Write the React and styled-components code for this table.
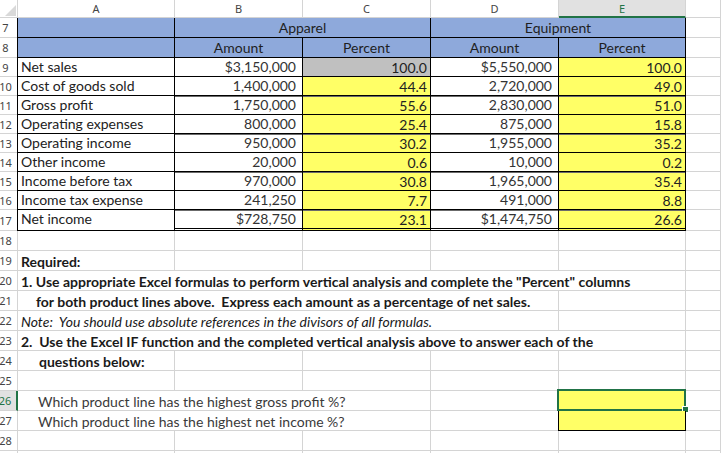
import React from "react";
import styled, { createGlobalStyle } from "styled-components";

const GlobalStyle = createGlobalStyle`
  html, body {
    margin: 0;
    padding: 0;
    background: #fff;
  }
`;

const COLS = "18px 157px 128px 128px 128px 127px 35px";
const GREEN = "#217346";
const BLUE = "#8ea9db";
const YELLOW = "#ffff66";

const data = [
  { n: 9, label: "Net sales", a1: "$3,150,000", p1: "100.0", a2: "$5,550,000", p2: "100.0", gray: true },
  { n: 10, label: "Cost of goods sold", a1: "1,400,000", p1: "44.4", a2: "2,720,000", p2: "49.0" },
  { n: 11, label: "Gross profit", a1: "1,750,000", p1: "55.6", a2: "2,830,000", p2: "51.0", total: true },
  { n: 12, label: "Operating expenses", a1: "800,000", p1: "25.4", a2: "875,000", p2: "15.8" },
  { n: 13, label: "Operating income", a1: "950,000", p1: "30.2", a2: "1,955,000", p2: "35.2", total: true },
  { n: 14, label: "Other income", a1: "20,000", p1: "0.6", a2: "10,000", p2: "0.2" },
  { n: 15, label: "Income before tax", a1: "970,000", p1: "30.8", a2: "1,965,000", p2: "35.4", total: true },
  { n: 16, label: "Income tax expense", a1: "241,250", p1: "7.7", a2: "491,000", p2: "8.8" },
  { n: 17, label: "Net income", a1: "$728,750", p1: "23.1", a2: "$1,474,750", p2: "26.6", total: true, last: true },
];

// text that spills over the empty cells to its right
const notes = [
  { n: 19, text: "Required:", span: 1, bold: true },
  { n: 20, text: '1. Use appropriate Excel formulas to perform vertical analysis and complete the "Percent" columns', span: 5, bold: true },
  { n: 21, text: "for both product lines above.  Express each amount as a percentage of net sales.", span: 4, bold: true, indent: 15 },
  { n: 22, text: "Note:  You should use absolute references in the divisors of all formulas.", span: 4, italic: true },
  { n: 23, text: "2.  Use the Excel IF function and the completed vertical analysis above to answer each of the", span: 5, bold: true },
  { n: 24, text: "questions below:", span: 1, bold: true, indent: 18 },
  { n: 25, text: "", span: 1 },
];

const Sheet = styled.div`
  width: 721px;
  height: 453px;
  overflow: hidden;
  background: #fff;
  font-family: Lato, "Liberation Sans", sans-serif;
  font-size: 14px;
  color: #222;
`;

const Row = styled.div`
  display: grid;
  grid-template-columns: ${COLS};
  height: ${(p) => p.$h || 20}px;
`;

const ColHead = styled.div`
  box-sizing: border-box;
  display: flex;
  align-items: center;
  justify-content: center;
  font-family: "Noto Sans", sans-serif;
  font-size: 11px;
  color: ${(p) => (p.$active ? GREEN : "#444")};
  background: ${(p) => (p.$active ? "#e1e1e1" : "#fff")};
  border-right: 1px solid #d4d4d4;
  border-bottom: ${(p) => (p.$active ? `2px solid ${GREEN}` : "1px solid #d4d4d4")};
`;

const Corner = styled(ColHead)`
  align-items: flex-end;
  justify-content: flex-end;
`;

const RowNum = styled.div`
  box-sizing: border-box;
  display: flex;
  align-items: center;
  justify-content: center;
  padding-right: 6px;
  font-family: "Noto Sans", sans-serif;
  font-size: 11px;
  color: ${(p) => (p.$active ? GREEN : "#444")};
  background: ${(p) => (p.$active ? "#e1e1e1" : "#fff")};
  border-right: ${(p) => (p.$active ? `2px solid ${GREEN}` : "1px solid #d4d4d4")};
  border-bottom: 1px solid #d4d4d4;
  overflow: hidden;
`;

const Cell = styled.div`
  box-sizing: border-box;
  grid-column: span ${(p) => p.$span || 1};
  display: flex;
  align-items: center;
  min-width: 0;
  white-space: pre;
  overflow: hidden;
  line-height: 16px;
  border-right: 1px solid #d4d4d4;
  border-bottom: 1px solid #d4d4d4;
`;

const BoxCell = styled(Cell)`
  border-right-color: #000;
  border-bottom: ${(p) => (p.$last ? "3px double #000" : "1px solid #000")};
  box-shadow: ${(p) => (p.$total ? "inset 0 1px 0 #6b6b6b" : "none")};
`;

const Heading = styled(BoxCell)`
  justify-content: center;
  background: ${BLUE};
  color: #1f1f1f;
  box-shadow: ${(p) => (p.$first ? "-1px 0 0 #000" : "none")};
`;

const Label = styled(BoxCell)`
  padding-left: 3px;
  padding-bottom: ${(p) => (p.$last ? 3 : 0)}px;
  border-bottom: 1px solid #000;
  box-shadow: -1px 0 0 #000;
`;

const Amount = styled(BoxCell)`
  justify-content: flex-end;
  padding-right: 6px;
  padding-bottom: ${(p) => (p.$last ? 1 : 0)}px;
  color: #333;
`;

const Percent = styled(BoxCell)`
  align-items: flex-end;
  justify-content: flex-end;
  padding-right: 3px;
  background: ${(p) => (p.$gray ? "#c0c0c0" : YELLOW)};
`;

const Note = styled(Cell)`
  align-items: flex-end;
  padding-left: ${(p) => 3 + (p.$indent || 0)}px;
  font-weight: ${(p) => (p.$bold ? 700 : 400)};
  font-style: ${(p) => (p.$italic ? "italic" : "normal")};
  color: ${(p) => (p.$soft ? "#3a3a3a" : "#1a1a1a")};
`;

const Answer = styled(Cell)`
  position: relative;
  overflow: visible;
  background: ${YELLOW};
  border-right-color: #000;
  border-bottom-color: #000;
  box-shadow: -1px 0 0 #000;
`;

const Selection = styled.div`
  position: absolute;
  left: -2px;
  top: -2px;
  right: -1px;
  bottom: -1px;
  border: 2px solid ${GREEN};
  pointer-events: none;
`;

const Handle = styled.div`
  position: absolute;
  right: -4px;
  bottom: -3px;
  width: 5px;
  height: 5px;
  background: ${GREEN};
  border: 1px solid #fff;
`;

const Blank = ({ count }) =>
  Array.from({ length: count }, (_, i) => <Cell key={i} />);

export default function App() {
  return (
    <>
      <GlobalStyle />
      <Sheet>
        <Row $h={18}>
          <Corner>
            <svg width="14" height="14" viewBox="0 0 14 14">
              <polygon points="13,2 13,13 2,13" fill="#d9d9d9" />
            </svg>
          </Corner>
          <ColHead>A</ColHead>
          <ColHead>B</ColHead>
          <ColHead>C</ColHead>
          <ColHead>D</ColHead>
          <ColHead $active>E</ColHead>
          <ColHead />
        </Row>

        <Row $h={20}>
          <RowNum>7</RowNum>
          <Heading $first />
          <Heading $span={2}>Apparel</Heading>
          <Heading $span={2}>Equipment</Heading>
          <Cell />
        </Row>
        <Row $h={20}>
          <RowNum>8</RowNum>
          <Heading $first />
          <Heading>Amount</Heading>
          <Heading>Percent</Heading>
          <Heading>Amount</Heading>
          <Heading>Percent</Heading>
          <Cell />
        </Row>

        {data.map((r) => (
          <Row key={r.n} $h={r.last ? 21 : 19}>
            <RowNum>{r.n}</RowNum>
            <Label $last={r.last}>{r.label}</Label>
            <Amount $total={r.total} $last={r.last}>{r.a1}</Amount>
            <Percent $total={r.total} $last={r.last} $gray={r.gray}>{r.p1}</Percent>
            <Amount $total={r.total} $last={r.last}>{r.a2}</Amount>
            <Percent $total={r.total} $last={r.last}>{r.p2}</Percent>
            <Cell />
          </Row>
        ))}

        <Row $h={20}>
          <RowNum>18</RowNum>
          <Blank count={6} />
        </Row>

        {notes.map((r) => (
          <Row key={r.n} $h={20}>
            <RowNum>{r.n}</RowNum>
            <Note $span={r.span} $bold={r.bold} $italic={r.italic} $indent={r.indent}>
              {r.text}
            </Note>
            <Blank count={6 - r.span} />
          </Row>
        ))}

        <Row $h={20}>
          <RowNum $active>26</RowNum>
          <Note $span={3} $indent={17} $soft>
            Which product line has the highest gross profit %?
          </Note>
          <Cell />
          <Answer>
            <Selection />
            <Handle />
          </Answer>
          <Cell />
        </Row>
        <Row $h={20}>
          <RowNum>27</RowNum>
          <Note $span={3} $indent={17} $soft>
            Which product line has the highest net income %?
          </Note>
          <Cell />
          <Answer />
          <Cell />
        </Row>
        <Row $h={20}>
          <RowNum>28</RowNum>
          <Blank count={6} />
        </Row>
        <Row $h={20}>
          <RowNum />
          <Blank count={6} />
        </Row>
      </Sheet>
    </>
  );
}
